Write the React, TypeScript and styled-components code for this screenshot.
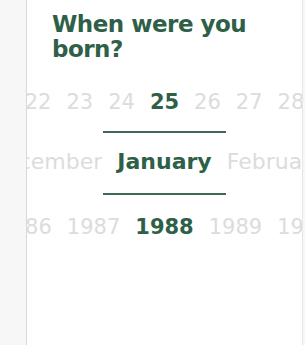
import styled, { createGlobalStyle } from "styled-components";

const GlobalStyle = createGlobalStyle`
  html, body {
    margin: 0;
    padding: 0;
    background: #f7f7f7;
  }
  body {
    font-family: "DejaVu Sans", "Liberation Sans", sans-serif;
  }
`;

const Page = styled.div`
  display: flex;
  height: 100vh;
`;

const Gutter = styled.div`
  width: 26px;
  flex-shrink: 0;
`;

const Card = styled.main`
  width: 275px;
  flex-shrink: 0;
  background: #ffffff;
  border-left: 1px solid #d9d9d9;
  border-right: 1px solid #e6e6e6;
  overflow: hidden;
`;

const Title = styled.h1`
  margin: 0;
  padding: 12px 20px 0 25px;
  font-size: 23px;
  line-height: 25px;
  letter-spacing: -0.5px;
  font-weight: 700;
  color: #2e5f47;
`;

const Picker = styled.div`
  display: flex;
  flex-direction: column;
  margin-top: 25px;
`;

const Wheel = styled.div<{ $size: number }>`
  display: grid;
  grid-template-columns: 1fr auto 1fr;
  column-gap: 15px;
  height: 30px;
  line-height: 30px;
  font-size: ${(p) => p.$size}px;
`;

const Side = styled.div<{ $align: "start" | "end" }>`
  display: flex;
  gap: 15px;
  justify-content: ${(p) => (p.$align === "end" ? "flex-end" : "flex-start")};
  overflow: hidden;
  white-space: nowrap;
`;

const Item = styled.span`
  flex-shrink: 0;
  color: #dcdcdc;
`;

const Selected = styled.span`
  color: #2e5f47;
  font-weight: 700;
`;

const Divider = styled.div<{ $above: number; $below: number }>`
  width: 123px;
  height: 2px;
  margin: ${(p) => p.$above}px auto ${(p) => p.$below}px;
  background: #3b6a52;
`;

function WheelRow(props: { before: string[]; value: string; after: string[]; size?: number }) {
  return (
    <Wheel $size={props.size ?? 21}>
      <Side $align="end">
        {props.before.map((v) => (
          <Item key={v}>{v}</Item>
        ))}
      </Side>
      <Selected>{props.value}</Selected>
      <Side $align="start">
        {props.after.map((v) => (
          <Item key={v}>{v}</Item>
        ))}
      </Side>
    </Wheel>
  );
}

export default function App() {
  return (
    <>
      <GlobalStyle />
      <Page>
        <Gutter />
        <Card>
          <Title>When were you born?</Title>
          <Picker>
            <WheelRow before={["21", "22", "23", "24"]} value="25" after={["26", "27", "28", "29"]} />
            <Divider $above={14} $below={14} />
            <WheelRow
              size={22}
              before={["November", "December"]}
              value="January"
              after={["February", "March"]}
            />
            <Divider $above={16} $below={17} />
            <WheelRow before={["1985", "1986", "1987"]} value="1988" after={["1989", "1990", "1991"]} />
          </Picker>
        </Card>
      </Page>
    </>
  );
}
